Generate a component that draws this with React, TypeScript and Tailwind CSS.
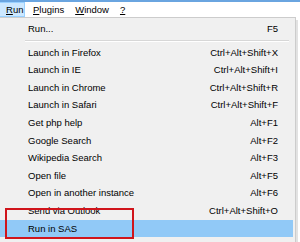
const items: { label: string; keys: string }[] = [
  { label: "Launch in Firefox", keys: "Ctrl+Alt+Shift+X" },
  { label: "Launch in IE", keys: "Ctrl+Alt+Shift+I" },
  { label: "Launch in Chrome", keys: "Ctrl+Alt+Shift+R" },
  { label: "Launch in Safari", keys: "Ctrl+Alt+Shift+F" },
  { label: "Get php help", keys: "Alt+F1" },
  { label: "Google Search", keys: "Alt+F2" },
  { label: "Wikipedia Search", keys: "Alt+F3" },
  { label: "Open file", keys: "Alt+F5" },
  { label: "Open in another instance", keys: "Alt+F6" },
  { label: "Send via Outlook", keys: "Ctrl+Alt+Shift+O" },
  { label: "Run in SAS", keys: "" },
];

function Row({ label, keys, active }: { label: string; keys: string; active?: boolean }) {
  return (
    <div
      className={`flex items-center h-[17.6px] pl-[28px] pr-[15px] mr-[2px] ${active ? "bg-[#91c9f7]" : ""}`}
    >
      <span className="flex-1">{label}</span>
      <span>{keys}</span>
    </div>
  );
}

export default function App() {
  return (
    <div className="relative w-[300px] h-[242px] overflow-hidden bg-white text-[9.5px] text-black font-['Liberation_Sans',Arial,sans-serif] leading-none">
      <div className="h-[2px] bg-[#6aa5e0]" />
      {/* menu bar */}
      <div className="flex items-center h-[15px] bg-white">
        <div className="flex items-center h-full px-[6px] w-[25px] bg-[#cce8ff] border border-[#99d1ff] border-l-0">
          <span className="underline">R</span>un
        </div>
        <div className="ml-[8px]">
          <span className="underline">P</span>lugins
        </div>
        <div className="ml-[11px]">
          <span className="underline">W</span>indow
        </div>
        <div className="ml-[11px]">
          <span className="underline">?</span>
        </div>
      </div>

      {/* dropdown */}
      <div className="flex w-[300px]">
        <div className="w-[296px] h-[230px] bg-[#f0f0f0] border border-l-0 border-[#cccccc] pt-[2px]">
          <Row label="Run..." keys="F5" />
          <div className="py-[2px] pl-[25px] pr-[6px]">
            <div className="h-px bg-[#d7d7d7]" />
            <div className="h-px bg-white" />
          </div>
          {items.map((it) => (
            <Row key={it.label} label={it.label} keys={it.keys} active={it.label === "Run in SAS"} />
          ))}
        </div>
        <div className="w-[2px] mt-[3px] h-[227px] bg-[#e2e2e2]" />
      </div>

      {/* annotation box */}
      <div className="absolute left-[5px] top-[208px] w-[129px] h-[31px] border-2 border-[#d0141b]" />
    </div>
  );
}
